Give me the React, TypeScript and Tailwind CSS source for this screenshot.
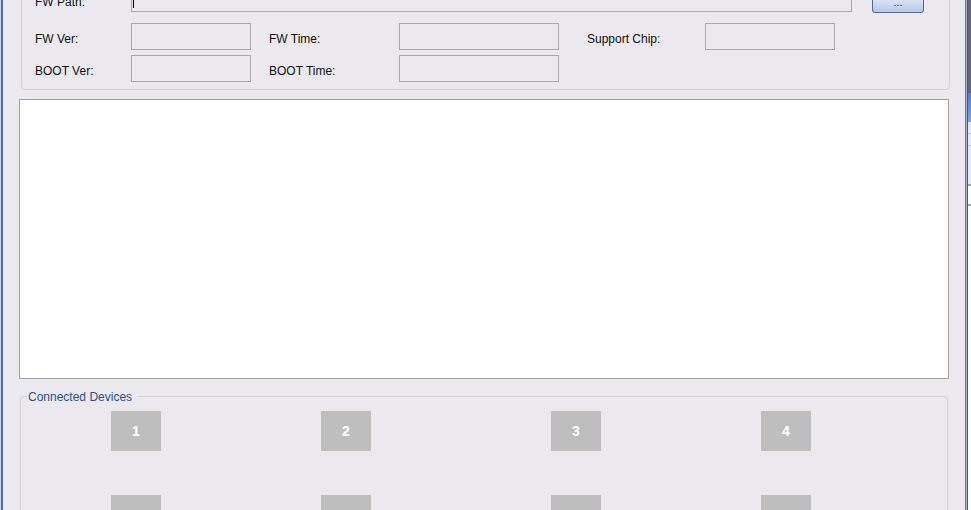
import React from "react";

const font = { fontFamily: '"Liberation Sans", Arial, sans-serif' };

function Field({ w, children }: { w: string; children?: React.ReactNode }) {
  return (
    <div className={`${w} h-[27px] shrink-0 border border-[#a9a9a9] bg-[#ebe9ee] flex items-center`}>
      {children}
    </div>
  );
}

function Label({ w, ml, text }: { w: string; ml?: string; text: string }) {
  return (
    <div className={`${w} ${ml ?? ""} shrink-0 mt-[4px] text-[12px] leading-[14px] text-[#111]`}>
      {text}
    </div>
  );
}

function DeviceBox({ n }: { n: number }) {
  return (
    <div className="w-[50px] h-[40px] shrink-0 bg-[#bebebe] flex items-center justify-center text-white font-bold text-[14px]">
      {n}
    </div>
  );
}

function DeviceRow({ nums }: { nums: number[] }) {
  return (
    <div className="flex pl-[90px]">
      <DeviceBox n={nums[0]} />
      <div className="ml-[160px]">
        <DeviceBox n={nums[1]} />
      </div>
      <div className="ml-[180px]">
        <DeviceBox n={nums[2]} />
      </div>
      <div className="ml-[160px]">
        <DeviceBox n={nums[3]} />
      </div>
    </div>
  );
}

export default function App() {
  return (
    <div className="w-[971px] h-[510px] overflow-hidden flex bg-[#ebe9ee]" style={font}>
      {/* window edge, left */}
      <div className="w-px shrink-0 bg-[#d8d8e4]" />
      <div className="w-[2px] shrink-0 bg-[#4a6da8]" />

      {/* main panel */}
      <div className="w-[962px] shrink-0 flex flex-col">
        {/* firmware info group */}
        <div className="ml-[18px] w-[929px] -mt-[28px] pt-[12px] pb-[7px] border border-[#d3d1d7] rounded-[4px] flex flex-col">
          <div className="flex items-center pl-[13px] h-[27px]">
            <div className="w-[96px] shrink-0 mt-[7px] text-[12px] leading-[14px] text-[#111]">FW Path:</div>
            <Field w="w-[721px]">
              <span className="ml-[1px] mt-[8px] w-px h-[10px] bg-black" />
            </Field>
            <button className="ml-[20px] w-[52px] h-[24px] self-end -mb-px rounded-[3px] border border-[#56698a] bg-gradient-to-b from-[#f5f8fd] to-[#b7c9e6] text-[11px] leading-[11px] text-[#333] flex items-end justify-center pb-[4px]">
              ...
            </button>
          </div>

          <div className="flex items-center pl-[13px] mt-[11px]">
            <Label w="w-[96px]" text="FW Ver:" />
            <Field w="w-[120px]" />
            <Label w="w-[130px]" ml="ml-[18px]" text="FW Time:" />
            <Field w="w-[160px]" />
            <Label w="w-[118px]" ml="ml-[28px]" text="Support Chip:" />
            <Field w="w-[130px]" />
          </div>

          <div className="flex items-center pl-[13px] mt-[5px]">
            <Label w="w-[96px]" text="BOOT Ver:" />
            <Field w="w-[120px]" />
            <Label w="w-[130px]" ml="ml-[18px]" text="BOOT Time:" />
            <Field w="w-[160px]" />
          </div>
        </div>

        {/* log output */}
        <div className="ml-[16px] mt-[9px] w-[930px] h-[280px] shrink-0 bg-white border border-[#a0a0a0]" />

        {/* connected devices */}
        <div className="relative ml-[17px] mt-[17px] w-[928px] h-[140px] shrink-0 border border-[#d3d1d7] rounded-[4px] pt-[14px] flex flex-col gap-[44px]">
          <span className="absolute -top-[7px] left-[6px] pl-[1px] pr-[5px] bg-[#ebe9ee] text-[12px] leading-[14px] text-[#2f4f8c]">
            Connected Devices
          </span>
          <DeviceRow nums={[1, 2, 3, 4]} />
          <DeviceRow nums={[5, 6, 7, 8]} />
        </div>
      </div>

      {/* window edge, right */}
      <div className="w-px shrink-0 bg-[#5a7dbd]" />
      <div className="w-px shrink-0 bg-[#9fb3d8]" />
      <div className="w-px shrink-0 bg-[#3b5d99]" />

      {/* neighbouring window sliver */}
      <div className="w-[3px] shrink-0 flex flex-col">
        <div className="h-[93px] shrink-0 bg-[#6c6571]" />
        <div className="h-[29px] shrink-0 bg-gradient-to-b from-[#4e80cf] to-[#7ba6e6]" />
        <div className="h-[11px] shrink-0 bg-[#e8e8ee]" />
        <div className="h-px shrink-0 bg-[#c8c8d2]" />
        <div className="h-[11px] shrink-0 bg-[#e8e8ee]" />
        <div className="h-px shrink-0 bg-[#c8c8d2]" />
        <div className="h-[38px] shrink-0 bg-[#e8e8ee]" />
        <div className="h-[2px] shrink-0 bg-[#a2a2a8]" />
        <div className="h-[18px] shrink-0 bg-white" />
        <div className="h-[2px] shrink-0 bg-[#a8a8a8]" />
        <div className="flex-1 bg-white" />
      </div>
    </div>
  );
}
